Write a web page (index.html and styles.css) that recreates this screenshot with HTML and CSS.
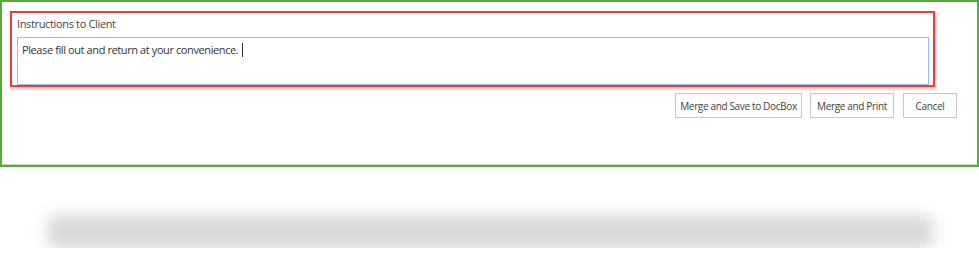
FILE: index.html
```html
<!DOCTYPE html>
<html lang="en">
<head>
    <meta charset="UTF-8">
    <title>Instructions to Client</title>
    <link rel="stylesheet" href="styles.css">
</head>
<body>
    <div class="frame">
        <!-- Instructions box -->
        <div class="highlight">
            <label class="field-label" for="instructions">Instructions to Client</label>
            <div class="textbox" id="instructions">Please fill out and return at your convenience.<span class="caret"></span></div>
        </div>

        <div class="actions">
            <button class="btn btn-docbox">Merge and Save to DocBox</button>
            <button class="btn btn-print">Merge and Print</button>
            <button class="btn btn-cancel">Cancel</button>
        </div>
    </div>

    <!-- blurred strip under the dialog -->
    <div class="smudge"></div>
</body>
</html>
```

FILE: styles.css
```css
body {
    margin: 0;
    padding: 0;
    background-color: #fff;
    font-family: "Open Sans", "Noto Sans", Arial, sans-serif;
    color: #333;
}

.frame {
    width: 979px;
    height: 167px;
    box-sizing: border-box;
    border: 2px solid #58ab34;
    box-shadow: inset 0 -1px 0 #cfcfcf;
    padding: 9px 0 0 8px;
}

.highlight {
    width: 925px;
    height: 76px;
    box-sizing: border-box;
    border: 2px solid #ee3b3b;
    box-shadow: 1px 2px 3px rgba(0, 0, 0, 0.25);
    padding: 3px 5px 0 5px;
}

.field-label {
    display: block;
    font-size: 11px;
    letter-spacing: -0.35px;
    line-height: 16px;
    height: 21px;
    color: #444;
}

.textbox {
    width: 912px;
    height: 48px;
    box-sizing: border-box;
    border: 1px solid #8ec1e8;
    padding: 4px 4px;
    font-size: 11px;
    letter-spacing: -0.4px;
    line-height: 16px;
    color: #333;
}

.caret {
    display: inline-block;
    width: 1px;
    height: 14px;
    margin-left: 4px;
    vertical-align: -3px;
    background-color: #333;
}

.actions {
    display: flex;
    justify-content: flex-end;
    gap: 8px;
    width: 947px;
    margin-top: 6px;
}

.btn {
    height: 25px;
    padding: 0;
    font-family: "Open Sans", "Noto Sans", Arial, sans-serif;
    font-size: 10px;
    letter-spacing: -0.35px;
    color: #444;
    background-color: #fdfdfd;
    border: 1px solid #c6c6c6;
    cursor: pointer;
}

.btn-docbox {
    width: 127px;
}

.btn-print {
    width: 84px;
}

.btn-cancel {
    width: 54px;
    margin-left: 1px;
}

.smudge {
    width: 884px;
    height: 32px;
    margin: 49px 0 0 48px;
    background-color: #d6d6d6;
    filter: blur(8px);
}
```
